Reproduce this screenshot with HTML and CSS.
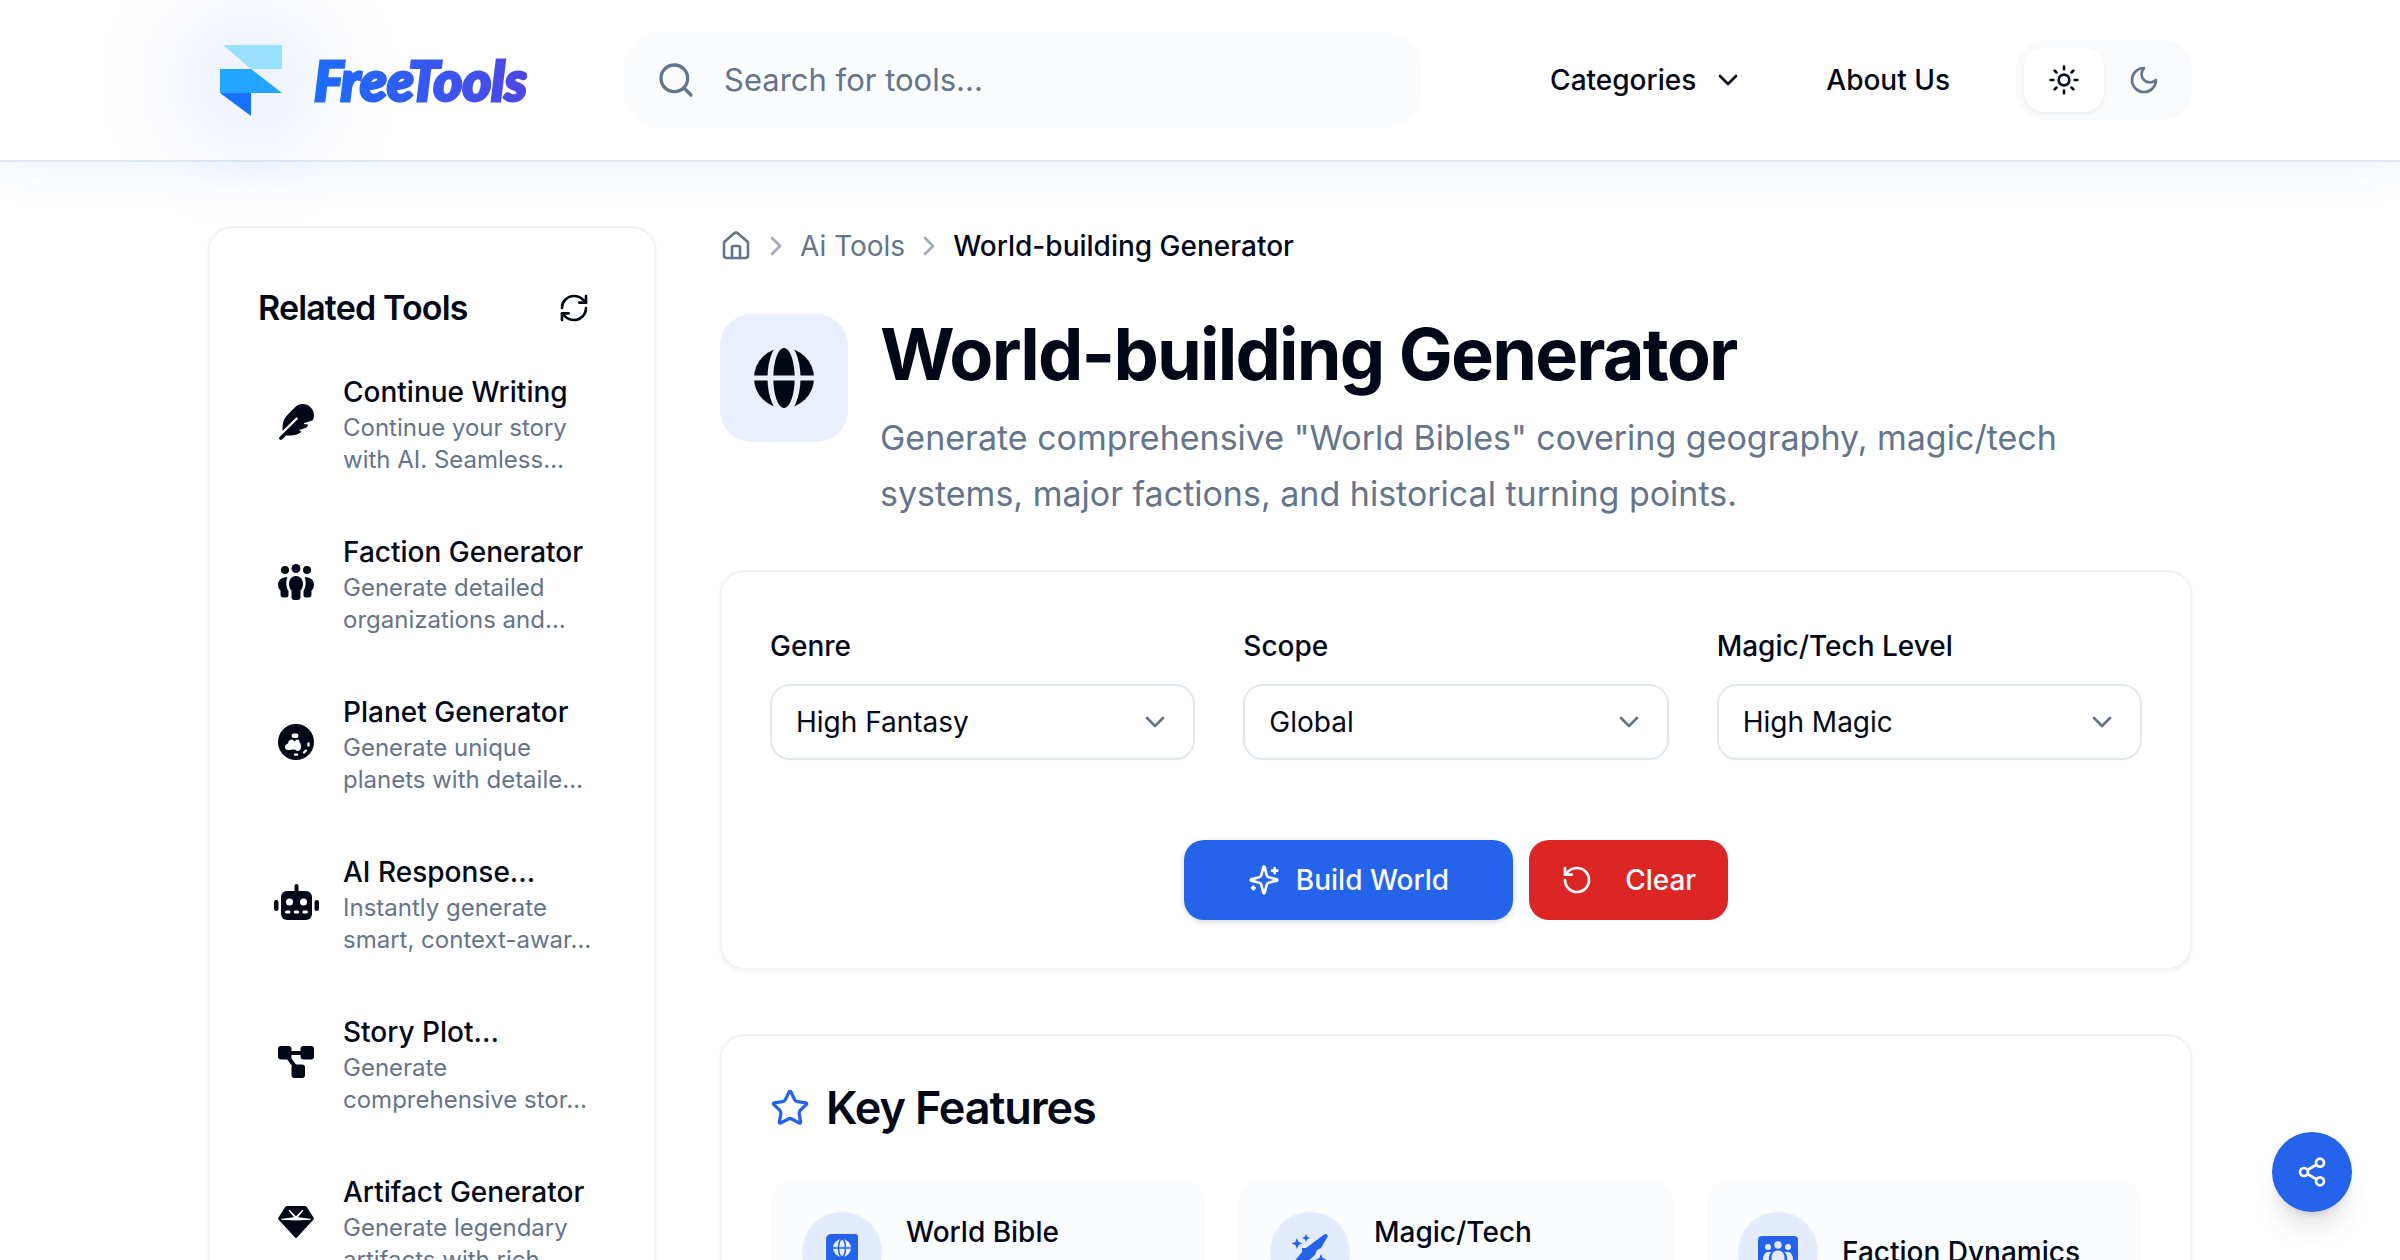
FILE: index.html
```html
<!DOCTYPE html>
<html lang="en">
<head>
    <meta charset="UTF-8" />
    <meta name="viewport" content="width=device-width, initial-scale=1" />
    <title>World-building Generator - FreeTools</title>
    <link rel="stylesheet" href="styles.css">
</head>
<body>
    <header class="site-header">
        <div class="container header-inner">
            <a href="/" class="brand">
                <svg class="brand-mark" viewBox="0 0 62 71" aria-hidden="true">
                    <path d="M3 0H62V24H31Z" fill="#99e1ff" />
                    <path d="M0 24H31L62 48H0Z" fill="#23a6ff" />
                    <path d="M0 48H31V71Z" fill="#1672ff" />
                </svg>
                <span class="brand-name">FreeTools</span>
            </a>

            <label class="search">
                <svg class="icon icon-lg" viewBox="0 0 24 24" aria-hidden="true"><circle cx="11" cy="11" r="8" /><path d="m21 21-4.3-4.3" /></svg>
                <input type="search" placeholder="Search for tools..." aria-label="Search for tools" />
            </label>

            <nav class="main-nav">
                <button type="button" class="nav-item">
                    Categories
                    <svg class="icon" viewBox="0 0 24 24" aria-hidden="true"><path d="m6 9 6 6 6-6" /></svg>
                </button>
                <a href="/about" class="nav-item">About Us</a>
                <div class="theme-toggle">
                    <button type="button" class="theme-btn active" aria-label="Light theme">
                        <svg class="icon" viewBox="0 0 24 24"><circle cx="12" cy="12" r="4" /><path d="M12 2v2M12 20v2M4.93 4.93l1.41 1.41M17.66 17.66l1.41 1.41M2 12h2M20 12h2M6.34 17.66l-1.41 1.41M19.07 4.93l-1.41 1.41" /></svg>
                    </button>
                    <button type="button" class="theme-btn" aria-label="Dark theme">
                        <svg class="icon" viewBox="0 0 24 24"><path d="M12 3a6 6 0 0 0 9 9 9 9 0 1 1-9-9Z" /></svg>
                    </button>
                </div>
            </nav>
        </div>
    </header>

    <div class="container page">
        <aside class="card sidebar">
            <div class="sidebar-head">
                <h2>Related Tools</h2>
                <button type="button" class="refresh" aria-label="Refresh related tools">
                    <svg class="icon" viewBox="0 0 24 24"><path d="M3 12a9 9 0 0 1 9-9 9.75 9.75 0 0 1 6.74 2.74L21 8" /><path d="M21 3v5h-5" /><path d="M21 12a9 9 0 0 1-9 9 9.75 9.75 0 0 1-6.74-2.74L3 16" /><path d="M8 16H3v5" /></svg>
                </button>
            </div>

            <ul class="tool-list">
                <li>
                    <a href="/tools/continue-writing" class="tool">
                        <span class="tool-icon">
                            <svg width="36" height="36" viewBox="0 0 512 512"><path d="M278.5 215.6L23 471c-9.4 9.4-9.4 24.6 0 33.9s24.6 9.4 33.9 0l57-57h68c49.7 0 97.9-14.4 139-41c11.1-7.2 5.5-23-7.8-23c-5.1 0-9.2-4.1-9.2-9.2c0-4.1 2.7-7.6 6.5-8.8l81-24.3c2.5-.8 4.8-2.1 6.7-4l22.4-22.4c10.1-10.1 2.9-27.3-11.3-27.3l-32.2 0c-5.1 0-9.2-4.1-9.2-9.2c0-4.1 2.7-7.6 6.5-8.8l112-33.6c4-1.2 7.4-3.9 9.3-7.7C506.4 207.6 512 184.1 512 160c0-41-16.3-80.3-45.3-109.3l-5.5-5.5C432.3 16.3 393 0 352 0s-80.3 16.3-109.3 45.3L139 149C91 197 64 262.1 64 330v55.3L253.6 195.8c6.2-6.2 16.4-6.2 22.6 0c5.4 5.4 6.1 13.6 2.2 19.8z" /></svg>
                        </span>
                        <span class="tool-text">
                            <span class="tool-name">Continue Writing</span>
                            <span class="tool-desc">Continue your story with AI. Seamless…</span>
                        </span>
                    </a>
                </li>
                <li>
                    <a href="/tools/faction-generator" class="tool">
                        <span class="tool-icon">
                            <svg width="36" height="36" viewBox="0 0 36 36"><circle cx="7" cy="6" r="4" /><circle cx="18" cy="4.5" r="4.5" /><circle cx="29" cy="6" r="4" /><path d="M18 12c4 0 7 3.500 7 8 0 3-1 5-2.500 6.500V33a3 3 0 0 1-3 3h-3a3 3 0 0 1-3-3v-6.500C12 25 11 23 11 20c0-4.500 3-8 7-8Z" /><path d="M9.500 13.500C5 12.500 0 15.500 0 21c0 2.500 1 4.500 2.500 5.500v4a3 3 0 0 0 3 3h2.500c1.500 0 2.500-1 2.500-2.500V27C8 23 7.500 17 9.500 13.500Z" /><path d="M26.500 13.500C31 12.500 36 15.500 36 21c0 2.500-1 4.500-2.500 5.500v4a3 3 0 0 1-3 3H28c-1.500 0-2.500-1-2.500-2.500V27c2.500-4 3-10 1-13.500Z" /></svg>
                        </span>
                        <span class="tool-text">
                            <span class="tool-name">Faction Generator</span>
                            <span class="tool-desc">Generate detailed organizations and…</span>
                        </span>
                    </a>
                </li>
                <li>
                    <a href="/tools/planet-generator" class="tool">
                        <span class="tool-icon">
                            <svg width="36" height="36" viewBox="0 0 36 36"><circle cx="18" cy="18" r="18" /><g fill="#fff"><rect x="13.500" y="9.500" width="7" height="4.500" rx="2.200" /><path d="M7 23c0-2 1.500-3 3-3.500 0-2.500 2-4 4-4 1 0 1.500 1.500 2.500 1.500s1.500-1.500 3-1.500 2 1.500 2 3c1.500 1 1.500 2.500 1.500 4.500 0 2.500-1.500 4-3.500 4-1.500 0-1.500-1.500-3-1.500-2 0-4.500.5-6.500.5-2 0-3-1-3-3Z" /></g><g fill="none" stroke="#fff" stroke-width="2.400" stroke-linecap="round"><path d="M17 30.600h2M26 28.500l1.800-1.800M30.500 21.500v-2" /></g></svg>
                        </span>
                        <span class="tool-text">
                            <span class="tool-name">Planet Generator</span>
                            <span class="tool-desc">Generate unique planets with detaile…</span>
                        </span>
                    </a>
                </li>
                <li>
                    <a href="/tools/ai-response" class="tool">
                        <span class="tool-icon">
                            <svg width="45" height="36" viewBox="0 0 45 36"><rect x="20.500" width="4" height="10" rx="2" /><rect x="7" y="7" width="31" height="29" rx="6" /><rect y="16" width="4.500" height="11" rx="2.200" /><rect x="40.500" y="16" width="4.500" height="11" rx="2.200" /><g fill="#fff"><circle cx="15.500" cy="18" r="3.500" /><circle cx="29.500" cy="18" r="3.500" /><rect x="11" y="26.500" width="5.500" height="3" rx="1.500" /><rect x="19.700" y="26.500" width="5.500" height="3" rx="1.500" /><rect x="28.400" y="26.500" width="5.500" height="3" rx="1.500" /></g></svg>
                        </span>
                        <span class="tool-text">
                            <span class="tool-name">AI Response…</span>
                            <span class="tool-desc">Instantly generate smart, context-awar…</span>
                        </span>
                    </a>
                </li>
                <li>
                    <a href="/tools/story-plot" class="tool">
                        <span class="tool-icon">
                            <svg width="36" height="32" viewBox="0 0 36 32"><rect width="13.500" height="13.500" rx="3" /><rect x="22.500" width="13.500" height="13.500" rx="3" /><rect x="13.500" y="18.500" width="13.500" height="13.500" rx="3" /><path d="M11 7h14M10 11l8 11" stroke="currentColor" stroke-width="4" /></svg>
                        </span>
                        <span class="tool-text">
                            <span class="tool-name">Story Plot…</span>
                            <span class="tool-desc">Generate comprehensive stor…</span>
                        </span>
                    </a>
                </li>
                <li>
                    <a href="/tools/artifact-generator" class="tool">
                        <span class="tool-icon">
                            <svg width="36" height="32" viewBox="0 0 36 32"><path d="M9 0h18q1 0 1.600.8L35.500 11.500q.8 1.200-.2 2.300L19 31.500q-1 1-2 0L.7 13.800q-1-1.100-.2-2.300L7.400.8Q8 0 9 0Z" /><path d="M3.500 12.700 16 11.300 10.600 4.600q0-1 1-.9L18 10.200l6.400-6.500q1-.1 1 .9L20 11.300l12.500 1.400q1 .6 0 1L18 14.500 3.500 13.700q-1-.4 0-1Z" fill="#fff" /></svg>
                        </span>
                        <span class="tool-text">
                            <span class="tool-name">Artifact Generator</span>
                            <span class="tool-desc">Generate legendary artifacts with rich…</span>
                        </span>
                    </a>
                </li>
            </ul>
        </aside>

        <main class="content">
            <nav class="breadcrumb" aria-label="Breadcrumb">
                <a href="/" aria-label="Home">
                    <svg class="icon" viewBox="0 0 24 24"><path d="M15 21v-8a1 1 0 0 0-1-1h-4a1 1 0 0 0-1 1v8" /><path d="M3 10a2 2 0 0 1 .709-1.528l7-5.999a2 2 0 0 1 2.582 0l7 5.999A2 2 0 0 1 21 10v9a2 2 0 0 1-2 2H5a2 2 0 0 1-2-2z" /></svg>
                </a>
                <svg class="icon sep" viewBox="0 0 24 24" aria-hidden="true"><path d="m9 18 6-6-6-6" /></svg>
                <a href="/ai-tools">Ai Tools</a>
                <svg class="icon sep" viewBox="0 0 24 24" aria-hidden="true"><path d="m9 18 6-6-6-6" /></svg>
                <span class="current">World-building Generator</span>
            </nav>

            <div class="hero">
                <div class="hero-icon">
                    <svg width="60" height="60" viewBox="0 0 60 60"><circle cx="30" cy="30" r="30" /><g fill="#e9effd"><ellipse cx="30" cy="30" rx="16.500" ry="36" /></g><ellipse cx="30" cy="30" rx="10.700" ry="30" /><path d="M0 27.500h60v5H0z" fill="#e9effd" /></svg>
                </div>
                <div>
                    <h1>World-building Generator</h1>
                    <p>Generate comprehensive "World Bibles" covering geography, magic/tech systems, major factions, and historical turning points.</p>
                </div>
            </div>

            <form class="card generator">
                <div class="fields">
                    <div class="field">
                        <label for="genre">Genre</label>
                        <div class="select">
                            <select id="genre"><option>High Fantasy</option></select>
                            <svg class="icon" viewBox="0 0 24 24" aria-hidden="true"><path d="m6 9 6 6 6-6" /></svg>
                        </div>
                    </div>
                    <div class="field">
                        <label for="scope">Scope</label>
                        <div class="select">
                            <select id="scope"><option>Global</option></select>
                            <svg class="icon" viewBox="0 0 24 24" aria-hidden="true"><path d="m6 9 6 6 6-6" /></svg>
                        </div>
                    </div>
                    <div class="field">
                        <label for="level">Magic/Tech Level</label>
                        <div class="select">
                            <select id="level"><option>High Magic</option></select>
                            <svg class="icon" viewBox="0 0 24 24" aria-hidden="true"><path d="m6 9 6 6 6-6" /></svg>
                        </div>
                    </div>
                </div>
                <div class="actions">
                    <button type="submit" class="btn">
                        <svg class="icon" viewBox="0 0 24 24" aria-hidden="true"><path d="M9.937 15.500A2 2 0 0 0 8.500 14.063l-6.135-1.582a.5.5 0 0 1 0-.962L8.500 9.936A2 2 0 0 0 9.937 8.500l1.582-6.135a.5.5 0 0 1 .963 0L14.063 8.500A2 2 0 0 0 15.500 9.937l6.135 1.581a.5.5 0 0 1 0 .964L15.500 14.063a2 2 0 0 0-1.437 1.437l-1.582 6.135a.5.5 0 0 1-.963 0z" /><path d="M20 3v4M22 5h-4M4 17v2M5 18H3" /></svg>
                        Build World
                    </button>
                    <button type="reset" class="btn clear">
                        <svg class="icon" viewBox="0 0 24 24" aria-hidden="true"><path d="M3 12a9 9 0 1 0 9-9 9.750 9.750 0 0 0-6.740 2.740L3 8" /><path d="M3 3v5h5" /></svg>
                        Clear
                    </button>
                </div>
            </form>

            <section class="card features">
                <h2>
                    <svg class="icon icon-lg" viewBox="0 0 24 24" aria-hidden="true"><path d="M11.525 2.295a.53.53 0 0 1 .95 0l2.310 4.679a2.123 2.123 0 0 0 1.595 1.160l5.166.756a.53.53 0 0 1 .294.904l-3.736 3.638a2.123 2.123 0 0 0-.611 1.878l.882 5.140a.53.53 0 0 1-.771.560l-4.618-2.428a2.122 2.122 0 0 0-1.973 0L6.396 21.010a.53.53 0 0 1-.770-.560l.881-5.139a2.122 2.122 0 0 0-.611-1.879L2.160 9.795a.53.53 0 0 1 .294-.906l5.165-.755a2.122 2.122 0 0 0 1.597-1.160z" /></svg>
                    Key Features
                </h2>
                <div class="feature-grid">
                    <div class="feature">
                        <span class="feature-icon">
                            <svg width="32" height="36" viewBox="0 0 32 36"><path d="M5 0h24a3 3 0 0 1 3 3v22a3 3 0 0 1-2 2.800V32a2 2 0 0 1 0 4H5a5 5 0 0 1-5-5V5a5 5 0 0 1 5-5Zm1 28a2 2 0 0 0 0 4h20v-4Z" /><circle cx="16" cy="14" r="9" fill="#e4ebfc" /><g fill="none" stroke="#2563eb" stroke-width="1.500"><ellipse cx="16" cy="14" rx="3.500" ry="9" /><path d="M7 14h18" /></g></svg>
                        </span>
                        <h3>World Bible Generation</h3>
                    </div>
                    <div class="feature">
                        <span class="feature-icon">
                            <svg width="36" height="36" viewBox="0 0 36 36"><path d="m31.500 1 .8-.6q1.500-1 2.700.2t.2 2.900L29 14l-4 2-2 5L7 35q-1.500 1.500-3 0l-3-3q-1.500-1.500 0-3l9-11v-4h4Z" /><path d="m14 0 1.200 2.800L18 4l-2.800 1.200L14 8l-1.200-2.800L10 4l2.800-1.200ZM5 4l1.600 3.900L10.500 9.500 6.600 11 5 15l-1.600-4L-.5 9.500l3.900-1.600ZM29 20l1.600 3.900 3.900 1.600-3.900 1.500L29 31l-1.600-4-3.900-1.500 3.900-1.600Z" /></svg>
                        </span>
                        <h3>Magic/Tech Systems</h3>
                    </div>
                    <div class="feature">
                        <span class="feature-icon">
                            <svg width="40" height="32" viewBox="0 0 40 32"><rect width="40" height="32" rx="4" /><g fill="#e4ebfc"><circle cx="10" cy="11" r="3" /><circle cx="20" cy="9" r="3.700" /><circle cx="30" cy="11" r="3" /><path d="M20 14.500c4 0 6.500 3 6.500 7.500v4h-13v-4c0-4.500 2.500-7.500 6.500-7.500ZM11 16c-4 0-6.500 3-6 10h6c-.5-4 0-8 2.500-10ZM29 16c4 0 6.500 3 6 10h-6c.5-4 0-8-2.500-10Z" /></g></svg>
                        </span>
                        <h3>Faction Dynamics</h3>
                    </div>
                </div>
            </section>
        </main>
    </div>

    <button type="button" class="share" aria-label="Share">
        <svg class="icon" viewBox="0 0 24 24"><circle cx="18" cy="5" r="3" /><circle cx="6" cy="12" r="3" /><circle cx="18" cy="19" r="3" /><path d="m8.590 13.510 6.830 3.980M15.410 6.510l-6.820 3.980" /></svg>
    </button>
</body>
</html>
```

FILE: styles.css
```css
* {
    box-sizing: border-box;
}

html {
    overflow: hidden;
}

body {
    margin: 0;
    font-family: Inter, "Liberation Sans", sans-serif;
    font-size: 28px;
    line-height: 40px;
    color: #020817;
    background: #fff;
}

h1, h2, h3, p, ul {
    margin: 0;
    padding: 0;
}

a {
    color: inherit;
    text-decoration: none;
}

button, input, select {
    font: inherit;
    color: inherit;
}

button {
    border: none;
    background: none;
    padding: 0;
    cursor: pointer;
}

.icon {
    width: 32px;
    height: 32px;
    flex: none;
    fill: none;
    stroke: currentColor;
    stroke-width: 2;
    stroke-linecap: round;
    stroke-linejoin: round;
}

.icon-lg {
    width: 40px;
    height: 40px;
}

.container {
    padding: 0 208px;
}

/* header */
.site-header {
    border-bottom: 2px solid #e0e8f1;
    box-shadow: 0 8px 40px rgba(37, 99, 235, 0.08);
}

.header-inner {
    display: flex;
    align-items: center;
    height: 160px;
}

.brand {
    position: relative;
    display: flex;
    align-items: center;
    gap: 32px;
    width: 416px;
    padding-left: 12px;
}

.brand::before {
    content: "";
    position: absolute;
    left: -118px;
    top: -124px;
    width: 320px;
    height: 320px;
    border-radius: 50%;
    background: radial-gradient(closest-side, rgba(79, 110, 241, 0.1), rgba(79, 110, 241, 0.06) 35%, rgba(79, 110, 241, 0.012) 70%, transparent);
}

.brand-mark {
    position: relative;
    width: 62px;
    height: 71px;
}

.brand-name {
    position: relative;
    font-family: Lato, sans-serif;
    font-size: 55px;
    font-weight: 900;
    font-style: italic;
    line-height: 64px;
    color: transparent;
    background: linear-gradient(to right, #1b6dfb, #4f46e5);
    background-clip: text;
    -webkit-background-clip: text;
    -webkit-text-stroke: 3px transparent;
}

.search {
    display: flex;
    align-items: center;
    gap: 28px;
    width: 798px;
    height: 96px;
    padding: 0 32px;
    border-radius: 36px;
    background: #fbfcfe;
    color: #64748b;
}

.search input {
    flex: 1;
    min-width: 0;
    padding: 0;
    border: none;
    outline: none;
    background: none;
    font-size: 31px;
}

.search input::placeholder {
    color: #64748b;
    opacity: 1;
}

.main-nav {
    display: flex;
    align-items: center;
    margin-left: auto;
}

.nav-item {
    display: flex;
    align-items: center;
    gap: 16px;
    margin-right: 82px;
    font-weight: 500;
}

a.nav-item {
    margin-right: 66px;
}

.theme-toggle {
    display: flex;
    padding: 8px;
    border-radius: 28px;
    background: #f9fafc;
}

.theme-btn {
    display: flex;
    align-items: center;
    justify-content: center;
    width: 80px;
    height: 64px;
    border-radius: 20px;
    color: #64748b;
}

.theme-btn.active {
    background: #fff;
    color: #020817;
    box-shadow: 0 2px 4px rgba(0, 0, 0, 0.05);
}

/* layout */
.page {
    display: grid;
    grid-template-columns: 448px minmax(0, 1fr);
    gap: 64px;
    align-items: start;
    padding-top: 64px;
    padding-bottom: 64px;
}

.card {
    padding: 48px;
    border: 2px solid #f2f3f4;
    border-radius: 24px;
    background: #fff;
    box-shadow: 0 2px 4px rgba(0, 0, 0, 0.05);
}

/* sidebar */
.sidebar-head {
    display: flex;
    align-items: center;
    justify-content: space-between;
    height: 64px;
    padding-right: 16px;
}

.sidebar h2 {
    font-size: 34px;
    font-weight: 600;
    letter-spacing: -0.025em;
}

.refresh {
    display: flex;
}

.tool-list {
    display: grid;
    gap: 8px;
    margin-top: 8px;
    list-style: none;
}

.tool {
    display: flex;
    align-items: center;
    gap: 23px;
    padding: 24px 0 24px 14px;
}

.tool-icon {
    display: flex;
    justify-content: center;
    width: 48px;
    flex: none;
    margin-bottom: 4px;
}

.tool-icon svg, .hero-icon svg, .feature-icon svg {
    fill: currentColor;
}

.tool-text {
    max-width: 256px;
}

.tool-name, .tool-desc {
    display: block;
}

.tool-name {
    font-weight: 500;
    white-space: nowrap;
}

.tool-desc {
    font-size: 24px;
    line-height: 32px;
    color: #64748b;
}

/* main column */
.breadcrumb {
    display: flex;
    align-items: center;
    gap: 8px;
    color: #64748b;
}

.breadcrumb a {
    display: flex;
}

.breadcrumb .sep {
    opacity: 0.6;
}

.breadcrumb .current {
    color: #020817;
    font-weight: 500;
}

.hero {
    display: flex;
    align-items: flex-start;
    gap: 32px;
    margin: 48px 0;
}

.hero-icon {
    display: flex;
    align-items: center;
    justify-content: center;
    flex: none;
    width: 128px;
    height: 128px;
    border-radius: 32px;
    background: #e9effd;
}

.hero h1 {
    font-size: 72px;
    font-weight: 700;
    line-height: 80px;
    letter-spacing: -0.025em;
}

.hero p {
    max-width: 1240px;
    margin-top: 16px;
    font-size: 34px;
    line-height: 56px;
    color: #64748b;
}

.fields {
    display: grid;
    grid-template-columns: repeat(3, 1fr);
    gap: 48px;
}

.field label {
    display: block;
    margin-bottom: 12px;
    line-height: 52px;
    font-weight: 500;
}

.select {
    position: relative;
}

.select select {
    display: block;
    width: 100%;
    height: 76px;
    padding: 0 72px 0 24px;
    border: 2px solid #e2e8f0;
    border-radius: 20px;
    background: #fff;
    appearance: none;
}

.select .icon {
    position: absolute;
    right: 24px;
    top: 22px;
    color: #64748b;
    pointer-events: none;
}

.actions {
    display: flex;
    justify-content: center;
    gap: 16px;
    margin-top: 80px;
}

.btn {
    display: flex;
    align-items: center;
    gap: 16px;
    height: 80px;
    padding: 0 64px;
    border-radius: 20px;
    background: #2563eb;
    color: #f8fafc;
    font-weight: 500;
    box-shadow: 0 2px 6px rgba(0, 0, 0, 0.15);
}

.btn.clear {
    gap: 32px;
    padding: 0 32px;
    background: #dc2626;
    box-shadow: none;
}

.features {
    margin-top: 64px;
}

.features h2 {
    display: flex;
    align-items: center;
    gap: 16px;
    font-size: 45px;
    font-weight: 600;
    line-height: 48px;
    letter-spacing: -0.025em;
}

.features h2 .icon {
    color: #2563eb;
}

.feature-grid {
    display: grid;
    grid-template-columns: repeat(3, 1fr);
    gap: 32px;
    margin-top: 48px;
}

.feature {
    display: flex;
    align-items: center;
    gap: 24px;
    padding: 32px;
    border-radius: 24px;
    background: #fbfcfe;
}

.feature-icon {
    display: flex;
    align-items: center;
    justify-content: center;
    flex: none;
    width: 80px;
    height: 80px;
    border-radius: 50%;
    background: #e4ebfc;
    color: #2563eb;
}

.feature h3 {
    max-width: 240px;
    font-size: 28px;
    font-weight: 500;
}

.share {
    position: fixed;
    right: 48px;
    bottom: 48px;
    display: flex;
    align-items: center;
    justify-content: center;
    width: 80px;
    height: 80px;
    border-radius: 50%;
    background: #2563eb;
    color: #fff;
    box-shadow: 0 20px 30px -6px rgba(0, 0, 0, 0.12), 0 8px 12px -8px rgba(0, 0, 0, 0.2);
}
```
